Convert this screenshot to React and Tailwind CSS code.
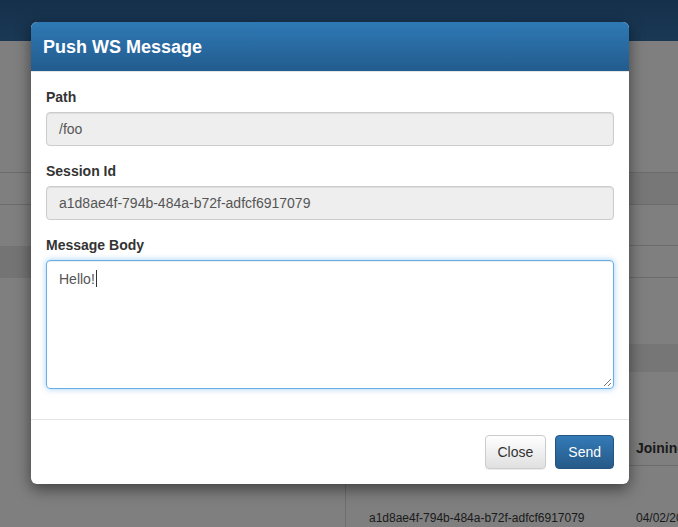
export default function App() {
  return (
    <div className="relative h-[527px] w-[678px] overflow-hidden bg-[#7f7f7f] font-['Liberation_Sans',Arial,sans-serif] text-[14px] text-[#333]">
      {/* dimmed page behind the modal */}
      <div className="h-[41px] bg-gradient-to-b from-[#15304b] to-[#1a3854]" />
      <div className="flex">
        <div className="w-[345px] shrink-0">
          <div className="h-[131px]" />
          <div className="h-[33px] border-y border-[#6c6c6c]" />
          <div className="h-[41px]" />
          <div className="h-[32px] bg-[#747474]" />
        </div>
        <div className="flex-1">
          <div className="h-[131px]" />
          <div className="h-[33px] border-y border-[#6c6c6c] bg-[#777]" />
          <div className="h-[41px] border-b border-[#6c6c6c]" />
          <div className="h-[32px] border-b border-[#6c6c6c]" />
          <div className="h-[66px]" />
          <div className="h-[28px] bg-[#767676]" />
          <div className="h-[200px] border-l border-[#6e6e6e] pl-[14px]">
            <div className="h-[42px]" />
            <div className="flex h-[52px] items-end whitespace-nowrap border-b border-[#6c6c6c] pb-[6px] pl-[276px] text-[14px] font-bold text-[#1a1a1a]">
              Joining
            </div>
            <div className="flex h-[62px] items-end whitespace-nowrap pb-[1px] pl-[9px] text-[12px] text-[#1a1a1a]">
              <span className="w-[267px]">a1d8ae4f-794b-484a-b72f-adfcf6917079</span>
              <span>04/02/2017</span>
            </div>
          </div>
        </div>
      </div>

      {/* modal */}
      <div className="absolute left-[31px] top-[22px] w-[598px] rounded-[6px] bg-white shadow-[0_5px_15px_rgba(0,0,0,0.5)]">
        <div className="flex h-[50px] items-center rounded-t-[6px] border-b border-[#e5e5e5] bg-gradient-to-b from-[#2e79b5] to-[#235c8e] px-[12px]">
          <h4 className="text-[18px] font-bold leading-none text-white">Push WS Message</h4>
        </div>
        <div className="px-[15px] pt-[15px]">
          <div className="mb-[15px]">
            <label className="mb-[5px] block h-[20px] font-bold leading-[20px]">Path</label>
            <div className="flex h-[34px] items-center rounded-[4px] border border-[#ccc] bg-[#eee] px-[12px] text-[#555] shadow-[inset_0_1px_1px_rgba(0,0,0,0.075)]">
              /foo
            </div>
          </div>
          <div className="mb-[15px]">
            <label className="mb-[5px] block h-[20px] font-bold leading-[20px]">Session Id</label>
            <div className="flex h-[34px] items-center rounded-[4px] border border-[#ccc] bg-[#eee] px-[12px] text-[#555] shadow-[inset_0_1px_1px_rgba(0,0,0,0.075)]">
              a1d8ae4f-794b-484a-b72f-adfcf6917079
            </div>
          </div>
          <div className="pb-[15px]">
            <label className="mb-[5px] block h-[20px] font-bold leading-[20px]">Message Body</label>
            <div className="relative h-[129px] rounded-[4px] border border-[#66afe9] px-[12px] py-[6px] text-[#555] shadow-[inset_0_1px_1px_rgba(0,0,0,0.075),0_0_6px_rgba(102,175,233,0.6)]">
              <span className="leading-[20px]">Hello!</span>
              <span className="ml-[1px] inline-block h-[17px] w-px translate-y-[3px] bg-[#333]" />
              <svg className="absolute bottom-[1px] right-[1px]" width="9" height="9" viewBox="0 0 9 9">
                <path d="M8 1 L1 8 M8 5 L5 8" stroke="#777" strokeWidth="1" />
              </svg>
            </div>
          </div>
        </div>
        <div className="mt-[15px] flex justify-end gap-[9px] border-t border-[#e5e5e5] p-[15px]">
          <button className="h-[34px] rounded-[4px] border border-[#ccc] bg-gradient-to-b from-white to-[#e0e0e0] px-[12px] text-[#333] shadow-[0_1px_1px_rgba(0,0,0,0.075)]">
            Close
          </button>
          <button className="h-[34px] rounded-[4px] border border-[#245580] bg-gradient-to-b from-[#337ab7] to-[#265a88] px-[12px] text-white">
            Send
          </button>
        </div>
      </div>
    </div>
  );
}
